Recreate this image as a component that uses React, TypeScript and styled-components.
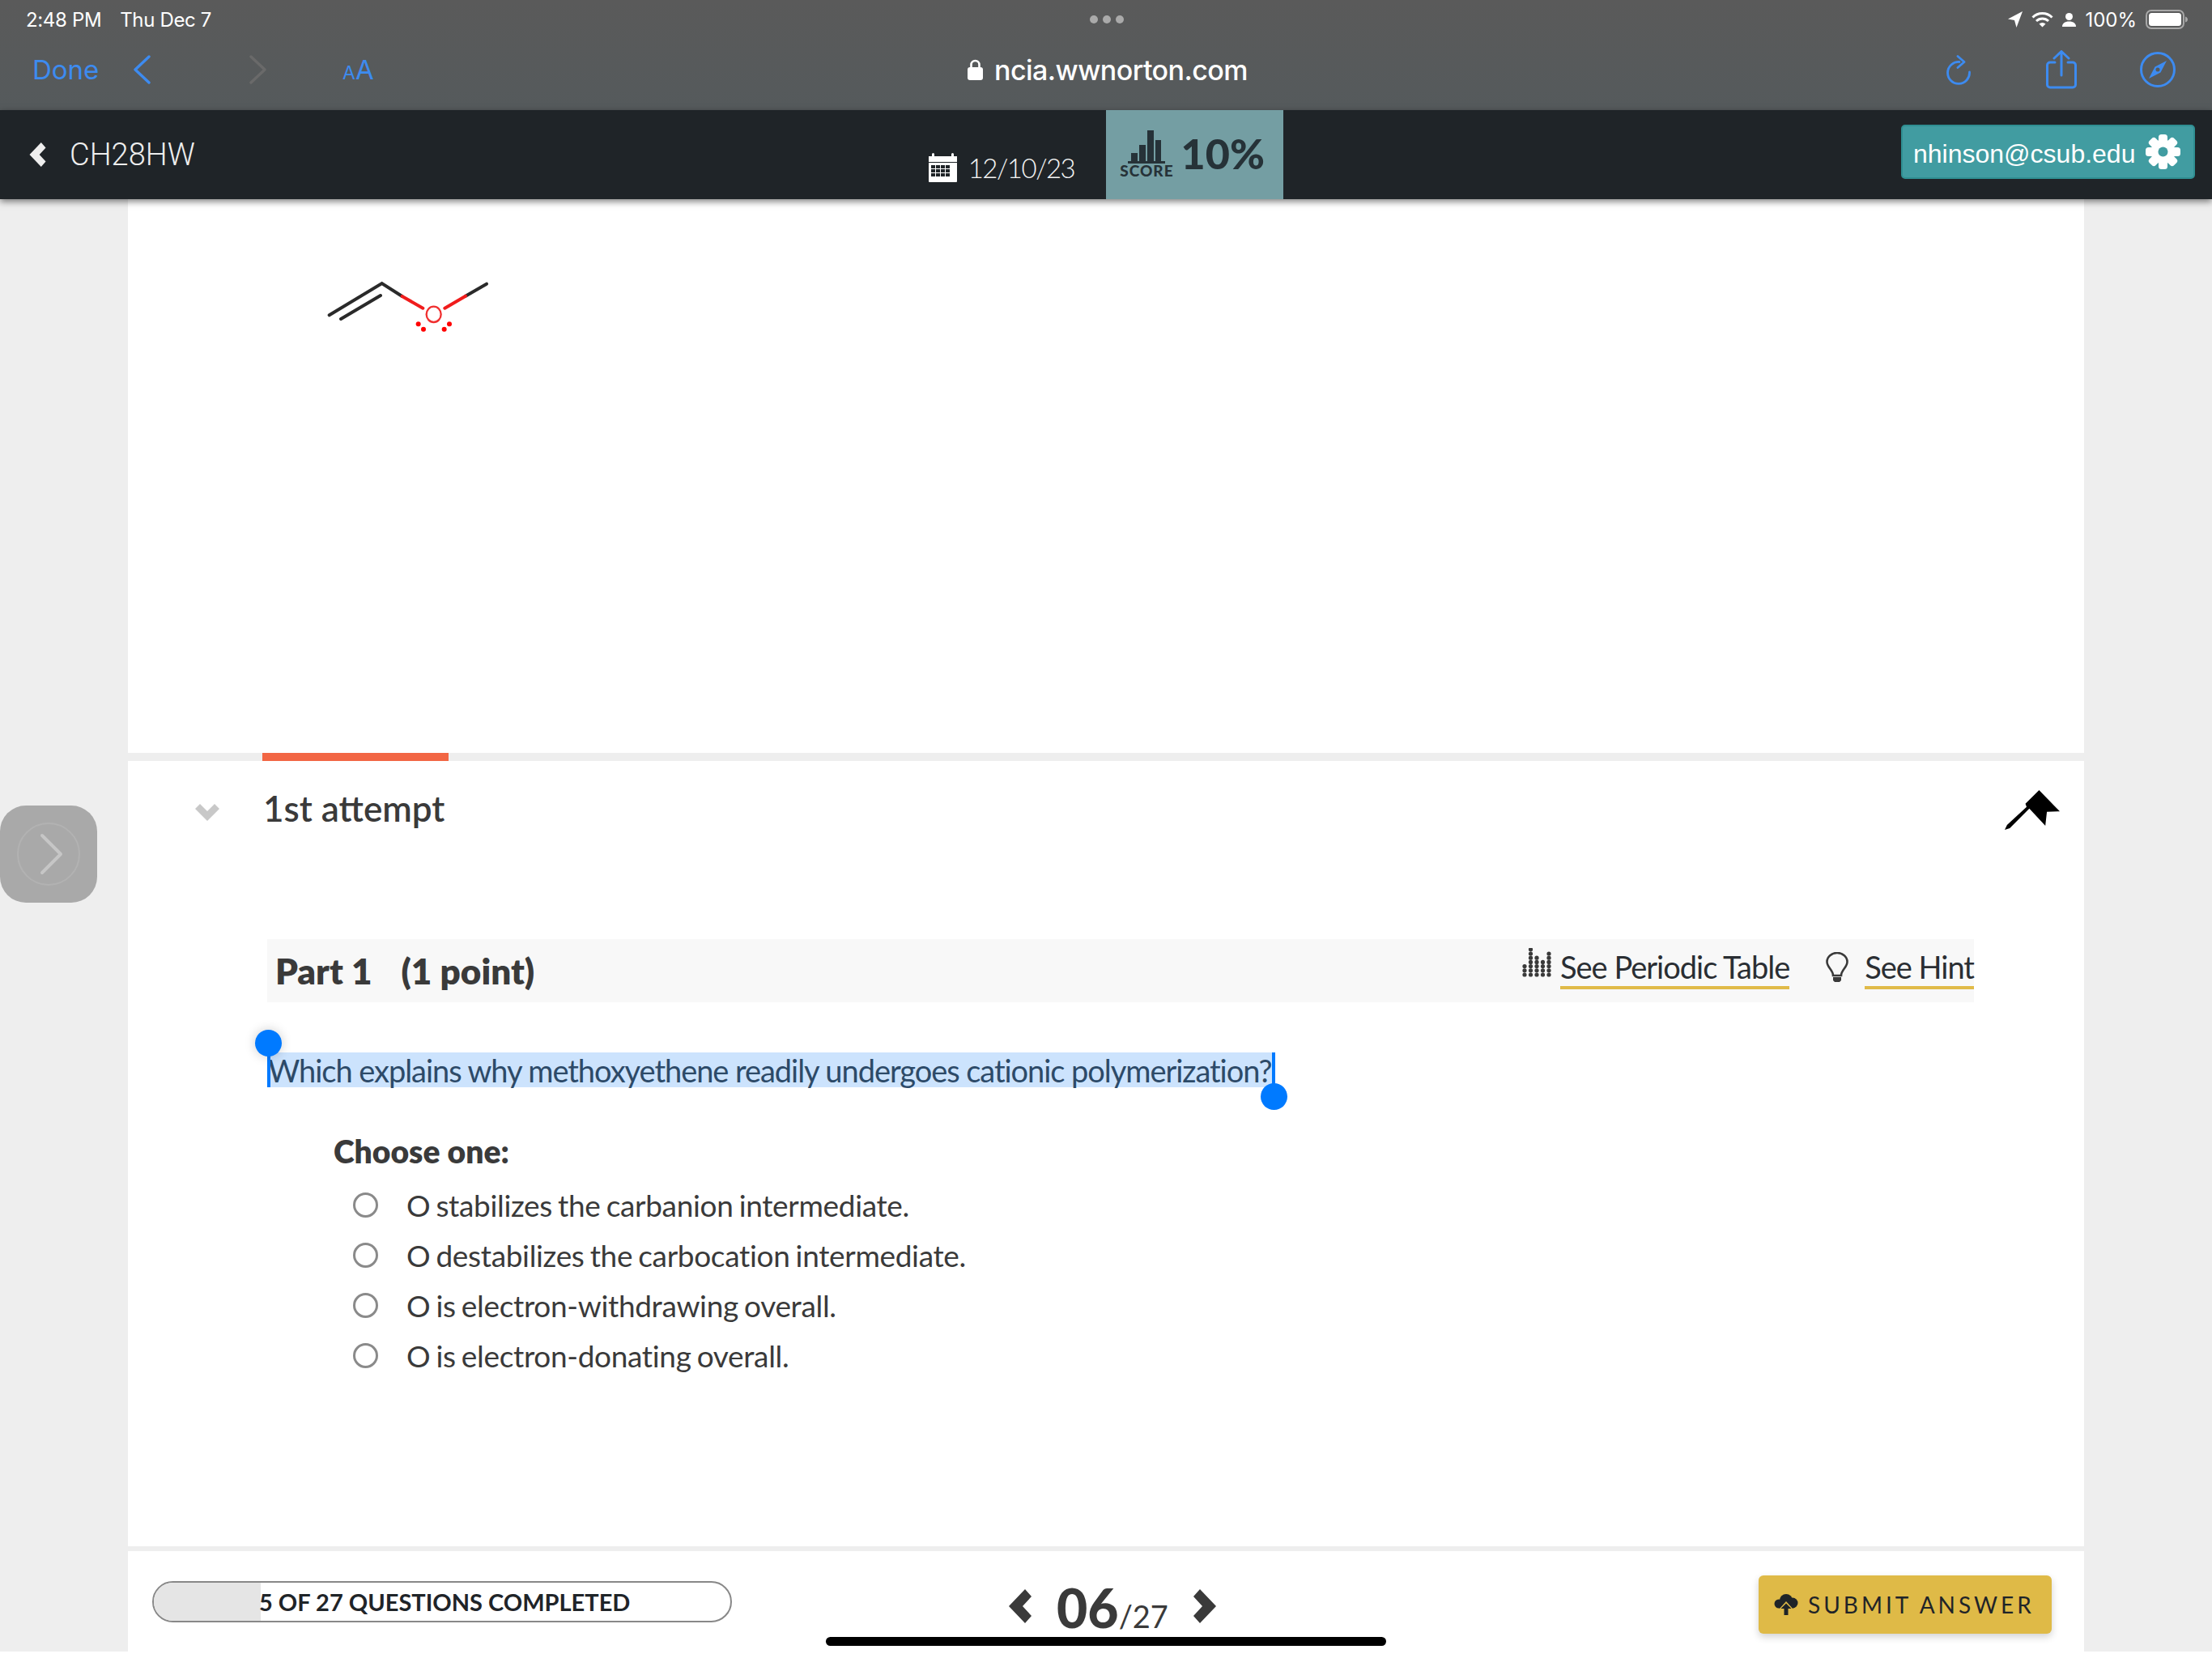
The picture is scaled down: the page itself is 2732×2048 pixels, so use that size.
import React from 'react';
import styled, { createGlobalStyle } from 'styled-components';

const GlobalStyle = createGlobalStyle`
  html, body {
    margin: 0;
    padding: 0;
    background: #fff;
  }
  * {
    box-sizing: border-box;
  }
`;

const Page = styled.div`
  position: relative;
  width: 2732px;
  height: 2048px;
  overflow: hidden;
  background: #eee;
  font-family: Lato, sans-serif;
  color: #3a3a3a;
`;

// safari chrome
const Chrome = styled.div`
  height: 136px;
  background: linear-gradient(#5a5a5a, #555a5c);
  font-family: Inter, Roboto, sans-serif;
`;

const StatusBar = styled.div`
  height: 48px;
  padding: 0 30px 0 32px;
  display: grid;
  grid-template-columns: 1fr auto 1fr;
  align-items: center;
  color: #fff;
  font-size: 24px;
`;

const StatusLeft = styled.div`
  display: flex;
  gap: 23px;
  letter-spacing: -0.35px;
`;

const Dots = styled.div`
  display: flex;
  gap: 6px;
`;

const Dot = styled.span`
  width: 10px;
  height: 10px;
  border-radius: 50%;
  background: #aaa;
`;

const StatusRight = styled.div`
  display: flex;
  justify-content: flex-end;
  align-items: center;
  gap: 11px;
`;

const ToolBar = styled.div`
  height: 76px;
  display: grid;
  grid-template-columns: 1fr auto 1fr;
  align-items: center;
  color: #3d8bf0;
`;

const ToolLeft = styled.div`
  display: flex;
  align-items: center;
  padding-left: 40px;
`;

const Done = styled.span`
  font-size: 33px;
  width: 125px;
`;

const ForwardGap = styled.span`
  width: 122px;
`;

const FontSize = styled.span`
  margin-left: 94px;
  font-size: 33px;
  display: flex;
  align-items: baseline;
  small {
    font-size: 23px;
  }
`;

const Address = styled.div`
  display: flex;
  align-items: center;
  gap: 14px;
  margin-left: 4px;
  color: #fff;
  font-size: 34px;
  font-weight: 500;
  letter-spacing: -0.55px;
`;

const ToolRight = styled.div`
  display: flex;
  justify-content: flex-end;
  align-items: center;
  padding-right: 45px;
  gap: 78px;
`;

const ReloadSlot = styled.span`
  display: flex;
  margin-right: 15px;
`;

// site header
const SiteHeader = styled.header`
  position: relative;
  z-index: 2;
  height: 110px;
  background: #1f2428;
  box-shadow: 0 3px 8px rgba(0, 0, 0, 0.5);
  display: grid;
  grid-template-columns: 1fr auto 1fr;
  color: #eee;
`;

const BackLink = styled.div`
  display: flex;
  align-items: center;
  gap: 29px;
  padding-left: 36px;
  font-family: Roboto, sans-serif;
  font-size: 38px;
  font-weight: 300;
`;

const Center = styled.div`
  display: flex;
`;

const DueDate = styled.div`
  display: flex;
  align-items: center;
  gap: 14px;
  padding: 32px 39px 0 0;
  font-size: 33px;
  font-weight: 300;
  letter-spacing: -1.5px;
  color: #f4f4f4;
`;

const ScoreBox = styled.div`
  width: 219px;
  background: #749ea3;
  color: #263238;
  display: flex;
  align-items: center;
  gap: 9px;
  padding-left: 17px;
`;

const ScoreLabel = styled.div`
  display: flex;
  flex-direction: column;
  align-items: center;
  margin-top: -2px;
  font-size: 19px;
  font-weight: 900;
  letter-spacing: 1px;
  line-height: 17px;
`;

const ScoreValue = styled.div`
  font-size: 52px;
  font-weight: 900;
  margin-top: -4px;
`;

const HeaderRight = styled.div`
  display: flex;
  justify-content: flex-end;
  padding: 18px 21px 0 0;
`;

const UserButton = styled.div`
  width: 363px;
  height: 67px;
  background: #419ca1;
  border: 2px solid #2f8f92;
  border-radius: 5px;
  color: #fff;
  display: flex;
  align-items: center;
  justify-content: space-between;
  padding: 0 16px 0 13px;
  font-family: 'Liberation Sans', sans-serif;
  font-size: 32px;
`;

const UserName = styled.span`
  padding-top: 6px;
`;

// page body
const Main = styled.main`
  width: 2416px;
  margin-left: 158px;
`;

const Figure = styled.section`
  height: 684px;
  background: #fff;
  padding: 64px 0 0 202px;
`;

const Divider = styled.div`
  height: 10px;
  background: #eee;
  padding-left: 166px;
`;

const ActiveTab = styled.div`
  width: 230px;
  height: 10px;
  background: #f26644;
`;

const Attempt = styled.section`
  height: 970px;
  background: #fff;
`;

const AttemptHeader = styled.div`
  display: flex;
  align-items: center;
  height: 116px;
  padding: 0 30px 0 83px;
`;

const CollapseIcon = styled.svg`
  margin-top: 10px;
`;

const PinIcon = styled.svg`
  margin-top: 4px;
`;

const AttemptTitle = styled.h2`
  margin: 0 0 0 54px;
  flex: 1;
  font-size: 44px;
  font-weight: 600;
`;

const Question = styled.div`
  margin: 104px 0 0 172px;
  width: 2108px;
`;

const PartBar = styled.div`
  height: 78px;
  background: #f8f8f8;
  display: flex;
  align-items: center;
  padding-left: 10px;
`;

const PartTitle = styled.h3`
  margin: 0;
  flex: 1;
  font-size: 44px;
  font-weight: 800;
  span {
    margin-left: 36px;
  }
`;

const ToolLink = styled.div<{ $gap: number; $iconGap: number }>`
  display: flex;
  align-items: flex-start;
  gap: ${(p) => p.$iconGap}px;
  margin-left: ${(p) => p.$gap}px;
  margin-top: -5px;
`;

const BulbSlot = styled.span`
  display: flex;
  margin-top: 5px;
`;

const LinkText = styled.span`
  font-size: 38px;
  letter-spacing: -1px;
  color: #2a2e33;
  line-height: 47px;
  border-bottom: 4px solid #e0ba48;
`;

const Prompt = styled.div`
  margin: 62px 0 0 1px;
`;

const Selected = styled.span`
  position: relative;
  display: inline-block;
  height: 43px;
  line-height: 45px;
  background: #cce3fd;
  color: #2d4a68;
  font-size: 38px;
  letter-spacing: -1.05px;
  padding-right: 3px;
`;

const Handle = styled.i<{ $end?: boolean }>`
  position: absolute;
  width: 33px;
  height: 33px;
  border-radius: 50%;
  background: #007aff;
  ${(p) => (p.$end ? 'right: -17px; top: 38px;' : 'left: -16px; top: -28px; box-shadow: 0 0 14px rgba(0,0,0,0.2);')}
`;

const Caret = styled.i<{ $end?: boolean }>`
  position: absolute;
  top: 0;
  width: 4px;
  height: 43px;
  background: #007aff;
  ${(p) => (p.$end ? 'right: -2px;' : 'left: -1px;')}
`;

const Choices = styled.div`
  margin: 56px 0 0 82px;
`;

const ChooseLabel = styled.div`
  font-size: 39px;
  font-weight: 800;
  line-height: 46px;
  margin-bottom: 12px;
`;

const Choice = styled.label`
  display: flex;
  align-items: center;
  height: 62px;
  padding-left: 24px;
  font-size: 37px;
  letter-spacing: -0.33px;
  word-spacing: -2px;
`;

const Radio = styled.span`
  width: 31px;
  height: 31px;
  border-radius: 50%;
  border: 3px solid #8a8a8a;
  margin-right: 35px;
`;

const Footer = styled.footer`
  margin-top: 6px;
  height: 124px;
  background: #fff;
  display: grid;
  grid-template-columns: 1fr auto 1fr;
  align-items: center;
  padding: 0 40px 0 30px;
`;

const Progress = styled.div`
  position: relative;
  width: 716px;
  height: 51px;
  border: 2px solid #888;
  border-radius: 26px;
  overflow: hidden;
  display: flex;
  align-items: center;
  padding-left: 130px;
  font-size: 29px;
  font-weight: 700;
  color: #1f2428;
`;

const ProgressFill = styled.div`
  position: absolute;
  left: 0;
  top: 0;
  bottom: 0;
  background: #e5e5e5;
`;

const ProgressText = styled.span`
  position: relative;
`;

const Pager = styled.div`
  align-self: start;
  display: flex;
  align-items: flex-start;
  gap: 31px;
  margin-left: 26px;
  padding-top: 47px;
`;

const PageNumber = styled.div`
  margin-top: -10px;
  font-size: 66px;
  font-weight: 900;
  line-height: 66px;
  small {
    font-size: 38px;
    font-weight: 400;
  }
`;

const SubmitCell = styled.div`
  display: flex;
  justify-content: flex-end;
  margin-top: 8px;
`;

const SubmitButton = styled.div`
  width: 362px;
  height: 72px;
  background: #dfba47;
  border-radius: 6px;
  box-shadow: 0 4px 10px rgba(0, 0, 0, 0.18);
  display: flex;
  align-items: center;
  gap: 12px;
  padding-left: 19px;
  color: #1f2428;
  font-size: 28px;
  letter-spacing: 4px;
`;

const Band = styled.div`
  height: 8px;
  background: #fff;
`;

// overlays
const SideButton = styled.div`
  position: absolute;
  left: 0;
  top: 995px;
  width: 120px;
  height: 120px;
  border-radius: 32px;
  background: #a9a9a9;
`;

const HomeIndicator = styled.div`
  position: absolute;
  left: 1020px;
  top: 2022px;
  width: 692px;
  height: 11px;
  border-radius: 6px;
  background: #000;
`;

const MoleculeSvg = styled.svg`
  display: block;
`;

const Molecule = () => (
  <MoleculeSvg width="300" height="130" viewBox="0 0 900 390">
    <g fill="none" strokeWidth="12" strokeLinecap="round">
      <path d="M140 238L335 120L410 168M183 252L330 165M645 167L723 122" stroke="#2a2a2a" />
      <path d="M410 168L487 212M568 212L645 167" stroke="#f01c1c" />
      <ellipse cx="527" cy="235" rx="27" ry="29" stroke="#f03030" strokeWidth="7" />
    </g>
    <g fill="#f00">
      <circle cx="470" cy="271" r="9" />
      <circle cx="489" cy="290" r="9" />
      <circle cx="566" cy="290" r="9" />
      <circle cx="585" cy="271" r="9" />
    </g>
  </MoleculeSvg>
);

const Chevron = ({ flip, color }: { flip?: boolean; color: string }) => (
  <svg width="21" height="36" viewBox="0 0 21 36" fill="none">
    <path d={flip ? 'M2 2L19 18L2 34' : 'M19 2L2 18L19 34'} stroke={color} strokeWidth="3.4" strokeLinecap="round" strokeLinejoin="round" />
  </svg>
);

const BoldChevron = ({ flip, color, w, h }: { flip?: boolean; color: string; w: number; h: number }) => (
  <svg width={w} height={h} viewBox="0 0 28 42">
    <path d={flip ? 'M8 0L28 21L8 42L0 33L11 21L0 9Z' : 'M20 0L0 21L20 42L28 33L17 21L28 9Z'} fill={color} />
  </svg>
);

const Lock = () => (
  <svg width="19" height="26" viewBox="0 0 19 26">
    <path d="M4.5 11V7a5 5 0 0110 0v4" fill="none" stroke="#fff" strokeWidth="2.6" />
    <rect x="0" y="10" width="19" height="16" rx="3" fill="#fff" />
  </svg>
);

const Battery = () => (
  <svg width="52" height="24" viewBox="0 0 52 24">
    <rect x="1" y="1" width="46" height="22" rx="6" fill="none" stroke="#a8a8a8" strokeWidth="2" />
    <rect x="4" y="4" width="40" height="16" rx="3.5" fill="#fff" />
    <path d="M49 8.5c2 .5 3 2 3 3.5s-1 3-3 3.5z" fill="#a8a8a8" />
  </svg>
);

const LocationArrow = () => (
  <svg width="18" height="20" viewBox="0 0 18 20">
    <path d="M18 0L10.5 20L8 11L0 9.5Z" fill="#fff" />
  </svg>
);

const Wifi = () => (
  <svg width="27" height="19" viewBox="0 0 27 19" fill="none" stroke="#fff" strokeWidth="3">
    <path d="M1.5 6.5a17 17 0 0124 0" />
    <path d="M6 11a11 11 0 0115 0" />
    <path d="M13.5 18.5L9.5 14.5a6 6 0 018 0Z" fill="#fff" stroke="none" />
  </svg>
);

const Person = () => (
  <svg width="17" height="17" viewBox="0 0 17 17" fill="#fff">
    <circle cx="8.5" cy="4.5" r="4.5" />
    <path d="M0 17c0-4 3-6.5 8.5-6.5S17 13 17 17Z" />
  </svg>
);

const Reload = () => (
  <svg width="30" height="37" viewBox="0 0 30 37" fill="none" stroke="#3d8bf0" strokeWidth="2.8" strokeLinecap="round" strokeLinejoin="round">
    <path d="M16 8.5A13.5 13.5 0 1028.5 21" />
    <path d="M14 1.5L22 8.5L14 15.5" />
  </svg>
);

const Share = () => (
  <svg width="38" height="48" viewBox="0 0 38 48" fill="none" stroke="#3d8bf0" strokeWidth="3" strokeLinecap="round" strokeLinejoin="round">
    <path d="M19 31V2M10 10L19 1.5L28 10" />
    <path d="M11 15H5a3.5 3.5 0 00-3.5 3.5v24A3.5 3.5 0 005 46h28a3.5 3.5 0 003.5-3.5v-24A3.5 3.5 0 0033 15h-6" />
  </svg>
);

const Compass = () => (
  <svg width="44" height="44" viewBox="0 0 44 44">
    <circle cx="22" cy="22" r="20.5" fill="none" stroke="#3d8bf0" strokeWidth="3" />
    <path fill="#3d8bf0" fillRule="evenodd" d="M33 11L25.5 25.5L11 33L18.5 18.5ZM22 19.5a2.5 2.5 0 100 5a2.5 2.5 0 000-5Z" />
  </svg>
);

const Calendar = () => (
  <svg width="35" height="36" viewBox="0 0 35 36">
    <path fill="#fff" d="M0 4h4V1.5a1.5 1.5 0 013 0V4h21V1.5a1.5 1.5 0 013 0V4h4v7H0Z" />
    <path fill="#fff" fillRule="evenodd" d="M0 12h35v23a1 1 0 01-1 1H1a1 1 0 01-1-1ZM3 15v4h5v-4Zm6 0v4h5v-4Zm6 0v4h5v-4Zm6 0v4h5v-4ZM3 20v4h5v-4Zm6 0v4h5v-4Zm6 0v4h5v-4Zm6 0v4h5v-4ZM3 25v4h5v-4Zm6 0v4h5v-4Zm6 0v4h5v-4Zm6 0v4h5v-4Z" />
  </svg>
);

const ScoreBars = () => (
  <svg width="46" height="41" viewBox="0 0 46 41" fill="#263238">
    <rect x="4" y="28" width="8" height="11" />
    <rect x="14" y="18" width="8" height="21" />
    <rect x="24" y="0" width="8" height="39" />
    <rect x="34" y="12" width="7" height="27" />
    <rect x="0" y="38" width="46" height="3" />
  </svg>
);

const Gear = () => (
  <svg width="43" height="43" viewBox="0 0 43 43">
    <g fill="#fff">
      {[0, 45, 90, 135].map((a) => (
        <rect key={a} x="16" y="0" width="11" height="43" rx="3.5" transform={`rotate(${a} 21.5 21.5)`} />
      ))}
    </g>
    <circle cx="21.5" cy="21.5" r="15" fill="#fff" />
    <circle cx="21.5" cy="21.5" r="6" fill="#419ca1" />
  </svg>
);

const Pin = () => (
  <PinIcon width="68" height="49" viewBox="1312 82 141 146" preserveAspectRatio="none">
    <path d="M1400 82L1453 160L1420 162L1416 213L1375 150L1325 222L1312 228L1318 210L1368 144L1365 132Z" fill="#000" />
  </PinIcon>
);

// dots per column of the little table icon, counted from the bottom
const periodicColumns = [3, 7, 5, 4, 6];

const PeriodicDots = () => (
  <svg width="36" height="36" viewBox="0 0 36 36" fill="#3a3a3a">
    {periodicColumns.map((count, c) =>
      Array.from({ length: count }).map((_, r) => (
        <circle key={`${c}-${r}`} cx={3 + c * 7.5} cy={33 - r * 5.2} r="2.6" />
      )),
    )}
  </svg>
);

const Bulb = () => (
  <svg width="28" height="38" viewBox="0 0 28 38" fill="none" stroke="#3a3a3a" strokeWidth="2.6">
    <path d="M9 29C9 22 1.5 19 1.5 12a12.5 11 0 0125 0C26.5 19 19 22 19 29Z" />
    <path d="M9 31h10v4l-2 2h-6l-2-2Z" fill="#3a3a3a" stroke="none" />
  </svg>
);

const CloudUpload = () => (
  <svg width="30" height="26" viewBox="0 0 30 26" fill="#1f2428">
    <circle cx="6" cy="12" r="5.5" />
    <circle cx="15" cy="8" r="8" />
    <circle cx="23" cy="11" r="6.5" />
    <rect x="6" y="10" width="18" height="7.5" />
    <path d="M15 9L24 19H19V26H11V19H6Z" fill="#dfba47" />
    <path d="M15 11.5L21.5 18H17.5V26H12.5V18H8.5Z" />
  </svg>
);

const SideArrow = () => (
  <svg width="120" height="120" viewBox="0 0 120 120" fill="none">
    <circle cx="60" cy="60" r="38" stroke="#b2b2b2" strokeWidth="2" />
    <path d="M52 37L75 60L52 83" stroke="#c6c6c6" strokeWidth="4" strokeLinecap="round" strokeLinejoin="round" />
  </svg>
);

const choices = [
  'O stabilizes the carbanion intermediate.',
  'O destabilizes the carbocation intermediate.',
  'O is electron-withdrawing overall.',
  'O is electron-donating overall.',
];

export default function App() {
  return (
    <Page>
      <GlobalStyle />
      <Chrome>
        <StatusBar>
          <StatusLeft>
            <span>2:48 PM</span>
            <span>Thu Dec 7</span>
          </StatusLeft>
          <Dots>
            <Dot />
            <Dot />
            <Dot />
          </Dots>
          <StatusRight>
            <LocationArrow />
            <Wifi />
            <Person />
            <span>100%</span>
            <Battery />
          </StatusRight>
        </StatusBar>
        <ToolBar>
          <ToolLeft>
            <Done>Done</Done>
            <Chevron color="#3d8bf0" />
            <ForwardGap />
            <Chevron flip color="#6a6a6a" />
            <FontSize>
              <small>A</small>A
            </FontSize>
          </ToolLeft>
          <Address>
            <Lock />
            ncia.wwnorton.com
          </Address>
          <ToolRight>
            <ReloadSlot>
              <Reload />
            </ReloadSlot>
            <Share />
            <Compass />
          </ToolRight>
        </ToolBar>
      </Chrome>
      <SiteHeader>
        <BackLink>
          <BoldChevron color="#eee" w={21} h={30} />
          CH28HW
        </BackLink>
        <Center>
          <DueDate>
            <Calendar />
            12/10/23
          </DueDate>
          <ScoreBox>
            <ScoreLabel>
              <ScoreBars />
              SCORE
            </ScoreLabel>
            <ScoreValue>10%</ScoreValue>
          </ScoreBox>
        </Center>
        <HeaderRight>
          <UserButton>
            <UserName>nhinson@csub.edu</UserName>
            <Gear />
          </UserButton>
        </HeaderRight>
      </SiteHeader>
      <Main>
        <Figure>
          <Molecule />
        </Figure>
        <Divider>
          <ActiveTab />
        </Divider>
        <Attempt>
          <AttemptHeader>
            <CollapseIcon width="30" height="21" viewBox="0 0 30 21">
              <path d="M0 6L6 0L15 9L24 0L30 6L15 21Z" fill="#c8c8c8" />
            </CollapseIcon>
            <AttemptTitle>1st attempt</AttemptTitle>
            <Pin />
          </AttemptHeader>
          <Question>
            <PartBar>
              <PartTitle>
                Part 1<span>(1 point)</span>
              </PartTitle>
              <ToolLink $gap={0} $iconGap={11}>
                <PeriodicDots />
                <LinkText>See Periodic Table</LinkText>
              </ToolLink>
              <ToolLink $gap={45} $iconGap={20}>
                <BulbSlot>
                  <Bulb />
                </BulbSlot>
                <LinkText>See Hint</LinkText>
              </ToolLink>
            </PartBar>
            <Prompt>
              <Selected>
                Which explains why methoxyethene readily undergoes cationic polymerization?
                <Caret />
                <Handle />
                <Caret $end />
                <Handle $end />
              </Selected>
            </Prompt>
            <Choices>
              <ChooseLabel>Choose one:</ChooseLabel>
              {choices.map((c) => (
                <Choice key={c}>
                  <Radio />
                  {c}
                </Choice>
              ))}
            </Choices>
          </Question>
        </Attempt>
        <Footer>
          <Progress>
            <ProgressFill style={{ width: `${(5 / 27) * 100}%` }} />
            <ProgressText>5 OF 27 QUESTIONS COMPLETED</ProgressText>
          </Progress>
          <Pager>
            <BoldChevron color="#3a3a3a" w={28} h={42} />
            <PageNumber>
              06<small>/27</small>
            </PageNumber>
            <BoldChevron flip color="#3a3a3a" w={28} h={42} />
          </Pager>
          <SubmitCell>
            <SubmitButton>
              <CloudUpload />
              SUBMIT ANSWER
            </SubmitButton>
          </SubmitCell>
        </Footer>
      </Main>
      <Band />
      <SideButton>
        <SideArrow />
      </SideButton>
      <HomeIndicator />
    </Page>
  );
}
